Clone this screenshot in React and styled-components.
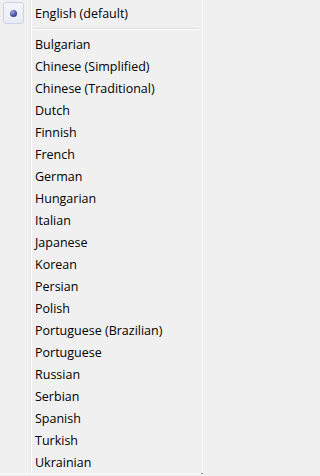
import styled, { createGlobalStyle } from "styled-components";

const GlobalStyle = createGlobalStyle`
  html, body {
    margin: 0;
    padding: 0;
    background: #f0f0f0;
  }
`;

const languages = [
  "Bulgarian",
  "Chinese (Simplified)",
  "Chinese (Traditional)",
  "Dutch",
  "Finnish",
  "French",
  "German",
  "Hungarian",
  "Italian",
  "Japanese",
  "Korean",
  "Persian",
  "Polish",
  "Portuguese (Brazilian)",
  "Portuguese",
  "Russian",
  "Serbian",
  "Spanish",
  "Turkish",
  "Ukrainian",
];

const StyledMenu = styled.div`
  position: relative;
  width: 203px;
  height: 474px;
  padding-top: 2px;
  box-sizing: border-box;
  border-right: 1px solid #fbfbfb;
  border-bottom: 1px solid #fbfbfb;
  background: linear-gradient(
    to right,
    #f0f0f0 30px,
    #e2e3e3 30px,
    #e2e3e3 31px,
    #ffffff 31px,
    #ffffff 32px,
    #f0f0f0 32px
  );
  font-family: "Open Sans", "Noto Sans", sans-serif;
  font-size: 12.5px;
  color: #000;
`;

const StyledItem = styled.div`
  display: flex;
  align-items: center;
  height: 22px;
`;

const StyledIconCell = styled.div`
  width: 30px;
  height: 22px;
  display: flex;
  align-items: center;
  padding-left: 3px;
  box-sizing: border-box;
  flex-shrink: 0;
`;

const StyledCheckFrame = styled.div`
  width: 21px;
  height: 22px;
  box-sizing: border-box;
  border: 1px solid #cdd3e6;
  border-radius: 3px;
  background: linear-gradient(#f4f5fa, #e9ebf4);
  display: flex;
  align-items: center;
  justify-content: center;
`;

const StyledDot = styled.div`
  width: 7px;
  height: 7px;
  border-radius: 50%;
  background: radial-gradient(circle at 35% 30%, #a0a5e0 0%, #4a4fa8 55%, #25286a 100%);
`;

const StyledLabel = styled.span`
  padding-left: 5px;
  white-space: nowrap;
`;

const StyledSeparator = styled.div`
  height: 9px;
  display: flex;
  flex-direction: column;
  justify-content: center;
  padding-left: 33px;
  padding-right: 3px;

  &::before {
    content: "";
    display: block;
    height: 1px;
    background: #e0e0e0;
  }
  &::after {
    content: "";
    display: block;
    height: 1px;
    background: #ffffff;
  }
`;

const StyledCorner = styled.div`
  position: absolute;
  right: -1px;
  bottom: -2px;
  width: 2px;
  height: 2px;
  background: #8a8a8a;
`;

export default function App() {
  return (
    <>
      <GlobalStyle />
      <StyledMenu>
        <StyledItem>
          <StyledIconCell>
            <StyledCheckFrame>
              <StyledDot />
            </StyledCheckFrame>
          </StyledIconCell>
          <StyledLabel>English (default)</StyledLabel>
        </StyledItem>
        <StyledSeparator />
        {languages.map((name) => (
          <StyledItem key={name}>
            <StyledIconCell />
            <StyledLabel>{name}</StyledLabel>
          </StyledItem>
        ))}
        <StyledCorner />
      </StyledMenu>
    </>
  );
}
